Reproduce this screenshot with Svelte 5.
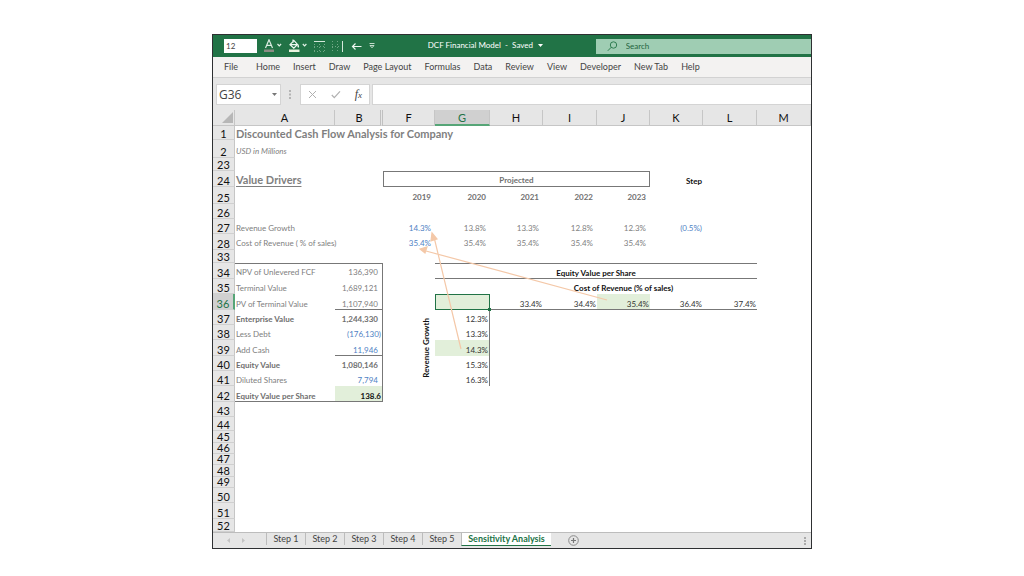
<script>
	const menus = [
		'File',
		'Home',
		'Insert',
		'Draw',
		'Page Layout',
		'Formulas',
		'Data',
		'Review',
		'View',
		'Developer',
		'New Tab',
		'Help',
	]

	const steps = ['Step 1', 'Step 2', 'Step 3', 'Step 4', 'Step 5']

	const columns = [
		{ name: 'A', width: 100 },
		{ name: 'B', width: 48 },
		{ name: 'F', width: 52 },
		{ name: 'G', width: 55 },
		{ name: 'H', width: 53 },
		{ name: 'I', width: 54 },
		{ name: 'J', width: 53 },
		{ name: 'K', width: 53 },
		{ name: 'L', width: 54 },
		{ name: 'M', width: null },
	]

	const c = (text = '', cls = '', span = 1, rows = 1) => ({ text, cls, span, rows })
	const gap = (span) => c('', '', span)

	const rows = [
		{ n: 1, h: 14, cells: [c('Discounted Cash Flow Analysis for Company', 'title', 10)] },
		{ n: 2, h: 18, cells: [c('USD in Millions', 'note', 10)] },
		{ n: 23, h: 13, cells: [gap(10)] },
		{
			n: 24,
			h: 16,
			cells: [
				c('Value Drivers', 'title under'),
				gap(1),
				c('Projected', 'bold center box', 5),
				c('Step', 'num bold black'),
				gap(2),
			],
		},
		{
			n: 25,
			h: 17,
			cells: [
				gap(2),
				...['2019', '2020', '2021', '2022', '2023'].map((y) => c(y, 'num wide bold year')),
				gap(3),
			],
		},
		{ n: 26, h: 15, cells: [gap(10)] },
		{
			n: 27,
			h: 15,
			cells: [
				c('Revenue Growth'),
				gap(1),
				c('14.3%', 'num wide blue'),
				...['13.8%', '13.3%', '12.8%', '12.3%'].map((v) => c(v, 'num wide')),
				c('(0.5%)', 'num blue'),
				gap(2),
			],
		},
		{
			n: 28,
			h: 16,
			cells: [
				c('Cost of Revenue ( % of sales)', 'raised', 2),
				c('35.4%', 'num wide blue raised'),
				...['35.4%', '35.4%', '35.4%', '35.4%'].map((v) => c(v, 'num wide raised')),
				gap(3),
			],
		},
		{ n: 33, h: 13, cells: [gap(10)] },
		{
			n: 34,
			h: 16,
			cells: [
				c('NPV of Unlevered FCF', 'top raised'),
				c('136,390', 'num wide top right raised'),
				gap(1),
				c('Equity Value per Share', 'bold black center top bottom', 6),
				gap(1),
			],
		},
		{
			n: 35,
			h: 15,
			cells: [
				c('Terminal Value'),
				c('1,689,121', 'num wide right'),
				gap(2),
				c('Cost of Revenue (% of sales)', 'bold black center', 5),
				gap(1),
			],
		},
		{
			n: 36,
			h: 16,
			cells: [
				c('PV of Terminal Value'),
				c('1,107,940', 'num wide right bottom'),
				gap(1),
				c('', 'fill selected'),
				c('33.4%', 'num dark bottom'),
				c('34.4%', 'num dark bottom'),
				c('35.4%', 'num dark bottom fill'),
				c('36.4%', 'num dark bottom'),
				c('37.4%', 'num dark bottom'),
				gap(1),
			],
		},
		{
			n: 37,
			h: 15,
			cells: [
				c('Enterprise Value', 'bold'),
				c('1,244,330', 'num wide bold right'),
				c('Revenue Growth', 'bold black turned', 1, 5),
				c('12.3%', 'num dark right'),
				gap(6),
			],
		},
		{
			n: 38,
			h: 15,
			cells: [c('Less Debt'), c('(176,130)', 'num blue right'), c('13.3%', 'num dark right'), gap(6)],
		},
		{
			n: 39,
			h: 16,
			cells: [
				c('Add Cash'),
				c('11,946', 'num wide blue right bottom'),
				c('14.3%', 'num dark right fill'),
				gap(6),
			],
		},
		{
			n: 40,
			h: 15,
			cells: [
				c('Equity Value', 'bold'),
				c('1,080,146', 'num wide bold right'),
				c('15.3%', 'num dark right'),
				gap(6),
			],
		},
		{
			n: 41,
			h: 15,
			cells: [c('Diluted Shares'), c('7,794', 'num wide blue right'), c('16.3%', 'num dark right'), gap(6)],
		},
		{
			n: 42,
			h: 16,
			cells: [
				c('Equity Value per Share', 'bold bottom'),
				c('138.6', 'num bold black right bottom fill'),
				gap(8),
			],
		},
		...[
			[43, 15],
			[44, 14],
			[45, 12],
			[46, 11],
			[47, 11],
			[48, 12],
			[49, 11],
			[50, 15],
			[51, 16],
			[52, 13],
		].map(([n, h]) => ({ n, h, cells: [gap(10)] })),
	]
</script>

<div class="window">
	<header class="titlebar">
		<div class="quick">
			<input class="size" aria-label="Font size" value="12" />
			<button aria-label="Font color">
				<svg width="18" height="14" viewBox="0 0 18 14">
					<path d="M1.500 9 5 .8 8.500 9M2.800 6.300h4.400" fill="none" stroke="#dcebe1" stroke-width="1.200" />
					<path d="M0 10.500h10v2.500H0z" fill="#8c8c84" />
					<path d="m13.500 5 1.800 1.800L17.100 5" fill="none" stroke="#e4f2e8" stroke-width="1.200" />
				</svg>
			</button>
			<button aria-label="Fill color">
				<svg width="18" height="14" viewBox="0 0 18 14">
					<path d="M1 5.700 5 1.700l3.500 3.700L4.800 9.200zM4 .5v3.200M1.500 5.700h7" fill="none" stroke="#eef7f0" stroke-width="1.200" />
					<path d="M9 5q2 2.700.3 3.800-1.600-1-.3-3.800z" fill="#eef7f0" />
					<path d="M0 10.500h10.500v2.500H0z" fill="#eaf3df" />
					<path d="m13.800 5 1.800 1.800L17.400 5" fill="none" stroke="#e4f2e8" stroke-width="1.200" />
				</svg>
			</button>
			<button aria-label="Top border">
				<svg width="11" height="13" viewBox="0 0 11 13">
					<path d="M0 1.500h11" stroke="#d5e8db" />
					<path d="M0 6.500h11M0 11.500h11M.5 4v8M5.500 4v8M10.500 4v8" stroke="#6fa685" stroke-dasharray="1 2" />
				</svg>
			</button>
			<button aria-label="Right border">
				<svg width="12" height="13" viewBox="0 0 12 13">
					<path d="M.5 1v11M5.500 1v11M0 6.500h8" stroke="#6fa685" stroke-dasharray="1 2" />
					<path d="M10.500 1v11" stroke="#d5e8db" />
				</svg>
			</button>
			<button aria-label="Back">
				<svg width="11" height="9" viewBox="0 0 11 9">
					<path d="M10.500 4.500H1.500M4.500 1.500l-3 3 3 3" fill="none" stroke="#eef7f0" stroke-width="1.200" />
				</svg>
			</button>
			<button aria-label="Customize toolbar">
				<svg width="6" height="6" viewBox="0 0 6 6">
					<path d="M.5.5h5M1 2.500h4L3 4.800z" fill="none" stroke="#d5e8db" stroke-width=".9" />
				</svg>
			</button>
		</div>
		<div class="doc">
			DCF Financial Model&nbsp; - &nbsp;Saved
			<svg width="5" height="3" viewBox="0 0 5 3"><path d="M0 0h5L2.500 3z" fill="#fff" /></svg>
		</div>
		<label class="search">
			<svg width="11" height="11" viewBox="0 0 11 11">
				<circle cx="6.500" cy="4" r="3.200" fill="none" stroke="#2f7d50" />
				<path d="M4.200 6.300.8 9.800" stroke="#2f7d50" />
			</svg>
			<input type="text" placeholder="Search" aria-label="Search" />
		</label>
	</header>

	<nav class="menus">
		{#each menus as menu}
			<button>{menu}</button>
		{/each}
	</nav>

	<div class="formula">
		<div class="name">
			<input aria-label="Name box" value="G36" />
			<svg width="5" height="3" viewBox="0 0 5 3"><path d="M0 0h5L2.500 3z" fill="#777" /></svg>
		</div>
		<svg class="grip" width="2" height="9" viewBox="0 0 2 9">
			<path d="M0 0h2v2H0zM0 3.500h2v2H0zM0 7h2v2H0z" fill="#b4b4b4" />
		</svg>
		<div class="actions">
			<button aria-label="Cancel">
				<svg width="9" height="9" viewBox="0 0 9 9">
					<path d="m1 1 7 7M8 1 1 8" stroke="#b0b0b0" />
				</svg>
			</button>
			<button aria-label="Enter">
				<svg width="10" height="9" viewBox="0 0 10 9">
					<path d="m.8 5 2.500 2.700L9 1.300" fill="none" stroke="#b0b0b0" stroke-width="1.200" />
				</svg>
			</button>
			<button class="fx" aria-label="Insert function">f<small>x</small></button>
		</div>
		<input class="entry" aria-label="Formula" />
	</div>

	<main class="sheet">
		<table>
			<colgroup>
				<col style:width="22px" />
				{#each columns as col}
					<col style:width={col.width ? `${col.width}px` : 'auto'} />
				{/each}
			</colgroup>
			<thead>
				<tr>
					<th class="corner" aria-label="Select all">
						<svg width="11" height="11" viewBox="0 0 11 11"><path d="M11 0v11H0z" fill="#b7b7b7" /></svg>
					</th>
					{#each columns as col}
						<th scope="col" class:active={col.name === 'G'} class:folded={col.name === 'B'}>{col.name}</th>
					{/each}
				</tr>
			</thead>
			<tbody>
				{#each rows as row}
					<tr style:height={`${row.h}px`}>
						<th scope="row" class:active={row.n === 36}>{row.n}</th>
						{#each row.cells as cell}
							<td class={cell.cls} colspan={cell.span} rowspan={cell.rows}>
								{#if cell.text}<span>{cell.text}</span>{/if}
							</td>
						{/each}
					</tr>
				{/each}
			</tbody>
		</table>

		<!-- links from the sensitivity inputs back to the drivers -->
		<svg class="arrows" width="598" height="422" viewBox="0 0 598 422">
			<g stroke="#f4c8a8" stroke-width="1.200" fill="#f4c8a8">
				<path d="M248 239 221 127M394 190 213 141" fill="none" />
				<path d="m219 123 5 6-6 2zM207 139l7-2-2 6z" />
			</g>
		</svg>
	</main>

	<footer class="tabs">
		<div class="arrowset">
			<svg width="20" height="5" viewBox="0 0 20 5">
				<path d="M3 0v5L0 2.500zM15 0v5l3-2.500z" fill="#c3c3c3" />
			</svg>
		</div>
		{#each steps as step}
			<button class="tab">{step}</button>
		{/each}
		<button class="tab current">Sensitivity Analysis</button>
		<button class="add" aria-label="New sheet">
			<svg width="11" height="11" viewBox="0 0 11 11">
				<circle cx="5.500" cy="5.500" r="4.800" fill="none" stroke="#8a8a8a" />
				<path d="M5.500 3v5M3 5.500h5" stroke="#777" stroke-width="1.200" />
			</svg>
		</button>
		<svg class="handle" width="2" height="8" viewBox="0 0 2 8">
			<path d="M0 0h2v2H0zM0 3h2v2H0zM0 6h2v2H0z" fill="#aaa" />
		</svg>
	</footer>
</div>

<style>
	:global(body) {
		background: #fff;
	}

	.window {
		box-sizing: border-box;
		max-width: 600px;
		margin: 34px auto 0;
		border: 1px solid #2e3032;
		overflow: hidden;
		font-family: Lato, 'Open Sans', sans-serif;
		font-size: 9px;
		color: #444;
		background: #fff;
	}

	button,
	input {
		margin: 0;
		padding: 0;
		border: 0;
		background: none;
		font: inherit;
		color: inherit;
		min-width: 0;
	}

	svg {
		display: block;
		flex: none;
	}

	/* title bar */
	.titlebar {
		display: flex;
		align-items: center;
		height: 22px;
		font-size: 8px;
		background: #217346;
	}

	.quick {
		display: flex;
		align-items: center;
		gap: 7px;
		padding-left: 11px;
	}

	.quick .size {
		box-sizing: border-box;
		width: 33px;
		height: 14px;
		padding-left: 2px;
		background: #fff;
	}

	.doc {
		flex: 1;
		display: flex;
		align-items: center;
		justify-content: center;
		gap: 5px;
		padding-bottom: 2px;
		color: #fff;
		white-space: nowrap;
	}

	.search {
		display: flex;
		align-items: center;
		gap: 8px;
		box-sizing: border-box;
		width: 36%;
		height: 15px;
		padding-left: 11px;
		background: #9fcdb3;
	}

	.search input {
		flex: 1;
	}

	.search input::placeholder {
		color: #1f6540;
		opacity: 1;
	}

	/* ribbon menus */
	.menus {
		display: flex;
		height: 20px;
		padding-left: 11px;
		background: #f3f2f1;
		gap: 13px;
		border-bottom: 1px solid #d2d2d2;
	}

	.menus button {
		padding-bottom: 1px;
		white-space: nowrap;
	}

	.menus button:first-child {
		margin-right: 5px;
	}

	/* formula bar */
	.formula {
		display: flex;
		align-items: center;
		height: 32px;
		padding-left: 3px;
		background: #e6e6e6;
	}

	.name,
	.actions,
	.entry {
		box-sizing: border-box;
		height: 21px;
		background: #fff;
		border: 1px solid #d4d4d4;
	}

	.name {
		display: flex;
		align-items: center;
		width: 65px;
		padding: 0 3px 0 2px;
		font-family: 'Open Sans', 'Noto Sans', sans-serif;
		font-size: 12px;
	}

	.name input {
		flex: 1;
	}

	.grip {
		margin: 0 9px 0 8px;
	}

	.actions {
		display: flex;
		align-items: center;
		justify-content: space-between;
		width: 70px;
		padding: 0 7px;
		margin-right: 2px;
	}

	.fx {
		font: italic 12px 'Liberation Serif', serif;
	}

	.fx small {
		font-size: 9px;
	}

	.entry {
		flex: 1;
		border-right: 0;
	}

	/* grid */
	.sheet {
		position: relative;
	}

	table {
		width: 100%;
		table-layout: fixed;
		border-collapse: separate;
		border-spacing: 0;
		line-height: 10px;
	}

	th {
		box-sizing: border-box;
		padding: 0;
		background: #e6e6e6;
		color: #111;
		font-size: 11px;
		font-weight: 400;
		vertical-align: bottom;
		border-right: 1px solid #c6c6c6;
		border-bottom: 1px solid #c6c6c6;
	}

	thead th {
		height: 16px;
		padding-bottom: 2px;
	}

	tbody th {
		border-bottom-color: #d0d0d0;
	}

	th.active {
		background: #d0d0d0;
		color: #217346;
	}

	thead th.active {
		border-bottom: 2px solid #56a577;
		padding-bottom: 1px;
	}

	tbody th.active {
		border-right: 2px solid #56a577;
	}

	.folded {
		padding-left: 3px;
		border-right: 3px double #c0c0c0;
	}

	.corner svg {
		margin-left: auto;
		margin-right: 1px;
	}

	td {
		box-sizing: border-box;
		padding: 0 1px 1px;
		font-size: 8px;
		color: #808080;
		white-space: nowrap;
		vertical-align: bottom;
	}

	td span {
		display: block;
	}

	.title {
		font-size: 11px;
		font-weight: 700;
		color: #7f7f7f;
	}

	.under span {
		text-decoration: underline;
		text-underline-offset: 2px;
		padding-bottom: 1px;
	}

	.note {
		font-style: italic;
		padding-bottom: 2px;
	}

	.bold {
		font-weight: 700;
		color: #6f6f6f;
	}

	.black {
		color: #111;
	}

	.dark {
		color: #333;
	}

	.blue {
		color: #4f82c4;
	}

	.num {
		text-align: right;
	}

	.wide {
		padding-right: 4px;
	}

	.year,
	.raised {
		padding-bottom: 2px;
	}

	.center {
		text-align: center;
	}

	.box {
		border: 1px solid #777;
	}

	.top {
		border-top: 1px solid #777;
	}

	.right {
		border-right: 1px solid #777;
	}

	.bottom {
		border-bottom: 1px solid #777;
		padding-bottom: 0;
	}

	.fill {
		background: #e2efda;
	}

	.selected {
		position: relative;
		border: 1px solid #217346;
	}

	.selected::after {
		content: '';
		position: absolute;
		right: -2px;
		bottom: -2px;
		width: 3px;
		height: 3px;
		background: #217346;
	}

	.turned {
		vertical-align: middle;
		padding: 0 4px 0 0;
	}

	.turned span {
		writing-mode: vertical-rl;
		transform: rotate(180deg);
		margin-left: auto;
	}

	.arrows {
		position: absolute;
		left: 0;
		top: 0;
		pointer-events: none;
	}

	/* sheet tabs */
	.tabs {
		display: flex;
		height: 15px;
		background: #e6e6e6;
		border-top: 1px solid #bdbdbd;
		line-height: 10px;
	}

	.arrowset {
		display: flex;
		align-items: center;
		width: 53px;
		padding-left: 14px;
		box-sizing: border-box;
	}

	.tab {
		box-sizing: border-box;
		width: 39px;
		height: 12px;
		border-left: 1px solid #bcbcbc;
		white-space: nowrap;
	}

	.current {
		width: 90px;
		height: 13px;
		background: #fff;
		color: #217346;
		font-weight: 700;
		border-bottom: 1px solid #217346;
	}

	.add {
		margin-left: 17px;
	}

	.handle {
		margin: 4px 5px 0 auto;
	}
</style>
